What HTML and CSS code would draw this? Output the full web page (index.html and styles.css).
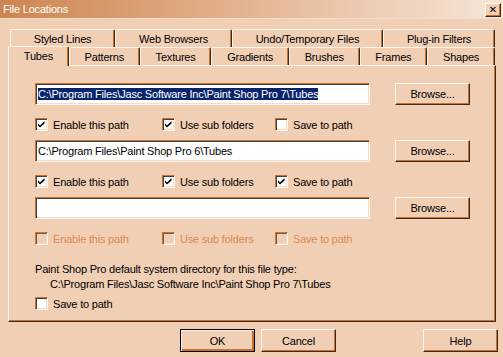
FILE: index.html
```html
<!DOCTYPE html>
<html lang="en">
<head>
    <meta charset="UTF-8">
    <meta name="viewport" content="width=device-width, initial-scale=1.0">
    <title>File Locations</title>
    <link rel="stylesheet" href="styles.css">
</head>
<body>
    <div class="window">
        <div class="titlebar">
            <span class="title">File Locations</span>
            <button class="close">&#x2715;</button>
        </div>

        <div class="tabs">
            <div class="tab-row back">
                <div class="tab">Styled Lines</div>
                <div class="tab">Web Browsers</div>
                <div class="tab">Undo/Temporary Files</div>
                <div class="tab">Plug-in Filters</div>
            </div>
            <div class="tab-row front">
                <div class="tab active">Tubes</div>
                <div class="tab">Patterns</div>
                <div class="tab">Textures</div>
                <div class="tab">Gradients</div>
                <div class="tab">Brushes</div>
                <div class="tab">Frames</div>
                <div class="tab">Shapes</div>
            </div>
        </div>

        <div class="panel">
            <div class="path-group">
                <div class="path-row">
                    <div class="field"><span class="selected">C:\Program Files\Jasc Software Inc\Paint Shop Pro 7\Tubes</span></div>
                    <button class="btn">Browse...</button>
                </div>
                <div class="check-row">
                    <label class="check"><span class="box on"></span>Enable this path</label>
                    <label class="check"><span class="box on"></span>Use sub folders</label>
                    <label class="check"><span class="box"></span>Save to path</label>
                </div>
            </div>

            <div class="path-group">
                <div class="path-row">
                    <div class="field">C:\Program Files\Paint Shop Pro 6\Tubes</div>
                    <button class="btn">Browse...</button>
                </div>
                <div class="check-row">
                    <label class="check"><span class="box on"></span>Enable this path</label>
                    <label class="check"><span class="box on"></span>Use sub folders</label>
                    <label class="check"><span class="box on"></span>Save to path</label>
                </div>
            </div>

            <div class="path-group">
                <div class="path-row">
                    <div class="field"></div>
                    <button class="btn">Browse...</button>
                </div>
                <div class="check-row disabled">
                    <label class="check"><span class="box"></span>Enable this path</label>
                    <label class="check"><span class="box"></span>Use sub folders</label>
                    <label class="check"><span class="box"></span>Save to path</label>
                </div>
            </div>

            <div class="default-info">
                <p>Paint Shop Pro default system directory for this file type:</p>
                <p class="indent">C:\Program Files\Jasc Software Inc\Paint Shop Pro 7\Tubes</p>
                <label class="check"><span class="box"></span>Save to path</label>
            </div>
        </div>

        <div class="actions">
            <button class="btn default">OK</button>
            <button class="btn">Cancel</button>
            <button class="btn help">Help</button>
        </div>
    </div>
</body>
</html>
```

FILE: styles.css
```css
body {
    margin: 0;
    font-family: "Liberation Sans", Arial, sans-serif;
    font-size: 11px;
    letter-spacing: -0.2px;
    color: #000;
}
.window {
    width: 503px;
    height: 357px;
    background-color: #f0cfb5;
    overflow: hidden;
}
.titlebar {
    height: 18px;
    display: flex;
    align-items: center;
    justify-content: space-between;
    padding: 0 2px 0 3px;
    background: linear-gradient(to right, #cd8550, #e2b08c 45%, #f6e6d8);
    border-bottom: 1px solid #f4dcc8;
}
.title {
    color: #fff;
    font-size: 11px;
}
.close {
    width: 16px;
    height: 14px;
    padding: 0;
    margin-top: 1px;
    font-family: "DejaVu Sans", sans-serif;
    font-size: 10px;
    font-weight: bold;
    line-height: 11px;
    letter-spacing: 0;
    background-color: #f0cfb5;
    border: 1px solid;
    border-color: #fff4ea #3a2a20 #3a2a20 #fff4ea;
    box-shadow: inset -1px -1px #c8702c;
}

/* tabs */
.tabs {
    margin-top: 10px;
}
.tab-row {
    display: flex;
    align-items: flex-end;
    height: 18px;
}
.tab-row.back {
    margin-left: 10px;
    width: 485px;
}
.tab-row.front {
    margin-left: 8px;
    width: 487px;
}
.tab {
    flex: 1 1 auto;
    height: 18px;
    box-sizing: border-box;
    padding: 2px 6px 0;
    text-align: center;
    line-height: 14px;
    border-top: 1px solid #fff4ea;
    border-left: 1px solid #fff4ea;
    border-right: 1px solid #3a2a20;
    border-radius: 2px 2px 0 0;
    box-shadow: inset -1px 0 #c8702c;
    white-space: nowrap;
}
.tab.active {
    position: relative;
    z-index: 1;
    height: 20px;
    margin-bottom: -1px;
    padding-top: 2px;
    background-color: #f0cfb5;
}

/* panel */
.panel {
    margin-left: 8px;
    width: 488px;
    height: 257px;
    box-sizing: border-box;
    padding: 17px 0 0 26px;
    border-top: 1px solid #fff4ea;
    border-left: 1px solid #fff4ea;
    border-right: 1px solid #3a2a20;
    border-bottom: 1px solid #3a2a20;
    box-shadow: inset -1px -1px #c8702c;
}
.path-group {
    margin-bottom: 9px;
}
.path-row {
    display: flex;
    align-items: center;
    gap: 25px;
}
.path-row .btn {
    height: 22px;
}
.field {
    width: 335px;
    height: 22px;
    box-sizing: border-box;
    padding: 3px 2px;
    line-height: 14px;
    background-color: #fff;
    border: 1px solid;
    border-color: #c8702c #fff4ea #fff4ea #c8702c;
    box-shadow: inset 1px 1px #404040, inset -1px -1px #f4dcc8;
    white-space: nowrap;
    overflow: hidden;
}
.selected {
    background-color: #0a246a;
    color: #fff;
}
.btn {
    width: 75px;
    height: 23px;
    padding: 0;
    font-family: inherit;
    font-size: 11px;
    letter-spacing: inherit;
    color: #000;
    background-color: #f0cfb5;
    border: 1px solid;
    border-color: #fff4ea #3a2a20 #3a2a20 #fff4ea;
    box-shadow: inset -1px -1px #c8702c;
}
.btn.default {
    border-color: #000;
    box-shadow: inset 1px 1px #fff4ea, inset -2px -2px #c8702c;
}
.check-row {
    display: grid;
    grid-template-columns: 127px 113px auto;
    margin-top: 13px;
}
.check {
    display: flex;
    align-items: center;
    gap: 5px;
    height: 13px;
    white-space: nowrap;
}
.box {
    width: 13px;
    height: 13px;
    box-sizing: border-box;
    background-color: #fff;
    border: 1px solid;
    border-color: #c8702c #fff4ea #fff4ea #c8702c;
    box-shadow: inset 1px 1px #404040, inset -1px -1px #f4dcc8;
    flex: none;
}
.box.on {
    background: #fff url("data:image/svg+xml;utf8,<svg xmlns='http://www.w3.org/2000/svg' width='11' height='11'><path d='M2 4.5 L4 6.5 L8.5 2 L8.5 4.5 L4 8.5 L2 6.5 Z' fill='black'/></svg>") no-repeat 0 0;
}
.disabled .check {
    color: #de8a4e;
}
.disabled .box {
    background-color: #f0cfb5;
    box-shadow: inset 1px 1px #7a5a44, inset -1px -1px #f4dcc8;
}
.default-info {
    margin-top: 17px;
}
.default-info p {
    margin: 0;
    line-height: 15px;
}
.default-info .indent {
    padding-left: 15px;
}
.default-info .check {
    margin-top: 5px;
}

/* bottom buttons */
.actions {
    display: flex;
    gap: 6px;
    margin: 7px 0 0 180px;
    width: 318px;
}
.actions .help {
    margin-left: auto;
}
```
